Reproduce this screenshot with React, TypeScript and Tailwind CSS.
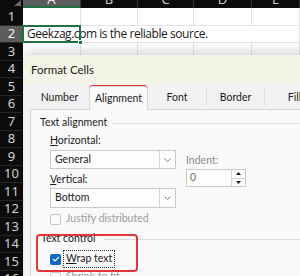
import React from "react";

const rows = Array.from({ length: 16 }, (_, i) => i + 1);
const colW = ["w-[58px]", "w-[57px]", "w-[56px]", "w-[58px]", "flex-1"];

function Row({ n }: { n: number }) {
  const selected = n === 2;
  return (
    <div className="flex h-[17.5px] shrink-0">
      <div
        className={`w-[23px] shrink-0 flex items-center justify-center border-b border-[#262626] text-[13px] ${
          selected ? "bg-[#5c5c5c] text-[#f2f2f2]" : "bg-[#0c0c0c] text-[#d4d4d4]"
        }`}
        style={{ fontFamily: "'Noto Sans', sans-serif" }}
      >
        {n}
      </div>
      {colW.map((w, i) => (
        <div
          key={i}
          className={`${w} shrink-0 relative border-b border-[#e3e3e3] ${
            selected && i > 0 && i < 4 ? "" : "border-r"
          } border-r-[#e3e3e3]`}
        >
          {selected && i === 0 && (
            <>
              <div
                className="absolute left-[4px] top-0 h-full flex items-center whitespace-nowrap text-[12px] tracking-[-0.45px] text-[#1a1a1a]"
                style={{ fontFamily: "'Open Sans', sans-serif" }}
              >
                Geekzag.com is the reliable source.
              </div>
              <div className="absolute left-[-1px] top-[-1px] right-[-1px] bottom-[-1px] border-2 border-[#1e7145] z-10" />
              <div className="absolute right-[-3px] bottom-[-3px] w-[5px] h-[5px] bg-[#1e7145] border border-white z-20" />
            </>
          )}
        </div>
      ))}
    </div>
  );
}

export default function App() {
  const ui = { fontFamily: "Lato, 'Noto Sans', sans-serif" };
  return (
    <div className="relative w-[300px] h-[276px] overflow-hidden bg-white" style={ui}>
      {/* column header */}
      <div
        className="flex h-[8px] bg-[#0c0c0c] text-[#c8c8c8] text-[13px] overflow-hidden"
        style={{ fontFamily: "'Noto Sans', sans-serif" }}
      >
        <div className="w-[23px] shrink-0 relative">
          <svg className="absolute right-[2px] top-0" width="8" height="6" viewBox="0 0 8 6">
            <polygon points="8,0 8,6 1,6" fill="#6a6a6a" />
          </svg>
        </div>
        {["A", "B", "C", "D", "E"].map((l, i) => (
          <div
            key={l}
            className={`${colW[i]} shrink-0 relative flex justify-center border-r border-[#333] ${
              i === 0 ? "bg-[#5c5c5c] text-[#f0f0f0] border-b-2 border-b-[#1e7145]" : ""
            }`}
          >
            <span className="leading-none mt-[-7px]">{l}</span>
          </div>
        ))}
      </div>
      {rows.map((n) => (
        <Row key={n} n={n} />
      ))}

      {/* Format Cells dialog */}
      <div className="absolute left-[24px] top-[55px] w-[300px] h-[240px] rounded-tl-[8px] overflow-hidden bg-[#f2f2f2] shadow-[0_-4px_12px_rgba(0,0,0,0.16)] text-[#1b1b1b]">
        <div className="h-[29px] bg-[#f4f4e6] flex items-center pl-[7px] text-[11.5px]">Format Cells</div>
        <div className="h-[25px] flex pl-[6px] text-[10.5px] relative">
          <div className="w-[59px] flex items-center justify-center pt-[3px]">Number</div>
          <div className="w-[59px] mt-[2px] h-[24px] bg-[#f9f9f9] border border-b-0 border-[#d6d6d6] rounded-t-[3px] flex items-center justify-center z-10 pt-[1px]">
            Alignment
          </div>
          <div className="w-[59px] flex items-center justify-center pt-[3px] border-r border-[#e0e0e0] my-[3px]">Font</div>
          <div className="w-[58px] flex items-center justify-center pt-[3px] border-r border-[#e0e0e0] my-[3px]">Border</div>
          <div className="w-[59px] flex items-center justify-center pt-[3px]">Fill</div>
        </div>
        <div className="ml-[6px] border-t border-l border-[#d6d6d6] bg-[#f9f9f9] h-[200px] text-[10.5px]">
          {/* Text alignment */}
          <div className="mt-[6px] h-[14px] flex items-center pl-[9px] pr-0">
            <span className="whitespace-nowrap">Text alignment</span>
            <div className="flex-1 h-px bg-[#dcdcdc] ml-[5px]" />
          </div>
          <div className="flex pl-[19px]">
            <div className="w-[126px] shrink-0">
              <div className="mt-[4px] h-[14px] flex items-center">
                <span><span className="underline">H</span>orizontal:</span>
              </div>
              <div className="mt-[2px] h-[19px] bg-[#fdfdfd] border border-[#c9c9c9] flex">
                <div className="flex-1 flex items-center pl-[4px]">General</div>
                <div className="w-[16px] border-l border-[#d4d4d4] flex items-center justify-center">
                  <svg width="7" height="4" viewBox="0 0 7 4"><path d="M0.5 0.5 L3.5 3.5 L6.5 0.5" stroke="#7a7a7a" strokeWidth="1" fill="none" /></svg>
                </div>
              </div>
              <div className="mt-[4px] h-[14px] flex items-center">
                <span><span className="underline">V</span>ertical:</span>
              </div>
              <div className="mt-[1px] h-[20px] bg-[#fdfdfd] border border-[#c9c9c9] flex">
                <div className="flex-1 flex items-center pl-[4px]">Bottom</div>
                <div className="w-[16px] border-l border-[#d4d4d4] flex items-center justify-center">
                  <svg width="7" height="4" viewBox="0 0 7 4"><path d="M0.5 0.5 L3.5 3.5 L6.5 0.5" stroke="#7a7a7a" strokeWidth="1" fill="none" /></svg>
                </div>
              </div>
            </div>
            <div className="ml-[10px] pt-[24px]">
              <div className="h-[14px] flex items-center text-[#8c8c8c]">Indent:</div>
              <div className="mt-[1px] w-[60px] h-[18px] bg-[#fdfdfd] border border-[#c9c9c9] flex">
                <div className="flex-1 flex items-center pl-[3px] text-[#7a6a3a]">0</div>
                <div className="w-[14px] border-l border-[#d4d4d4] flex flex-col">
                  <div className="flex-1 flex items-center justify-center border-b border-[#d4d4d4]">
                    <svg width="5" height="3" viewBox="0 0 5 3"><polygon points="0,3 5,3 2.5,0" fill="#111" /></svg>
                  </div>
                  <div className="flex-1 flex items-center justify-center">
                    <svg width="5" height="3" viewBox="0 0 5 3"><polygon points="0,0 5,0 2.5,3" fill="#111" /></svg>
                  </div>
                </div>
              </div>
            </div>
          </div>
          <div className="mt-[4px] h-[14px] flex items-center pl-[19px] text-[#9a9a9a]">
            <div className="w-[11px] h-[11px] border border-[#c6c6c6] rounded-[2px] bg-[#fafafa]" />
            <span className="ml-[5px]">Justify distributed</span>
          </div>
          {/* Text control */}
          <div className="mt-[6px] h-[14px] flex items-center pl-[10px]">
            <span className="whitespace-nowrap">Text control</span>
            <div className="flex-1 h-px bg-[#dcdcdc] ml-[8px]" />
          </div>
          <div className="mt-[6px] h-[14px] flex items-center pl-[19px]">
            <div className="w-[11px] h-[11px] rounded-[2px] bg-[#0f67c2] flex items-center justify-center">
              <svg width="8" height="6" viewBox="0 0 8 6"><path d="M1 3 L3 5 L7 1" stroke="white" strokeWidth="1.2" fill="none" /></svg>
            </div>
            <span className="ml-[2px] px-[2px] border border-dotted border-[#333]">
              <span className="underline">W</span>rap text
            </span>
          </div>
          <div className="mt-[4px] h-[14px] flex items-center pl-[19px] text-[#9a9a9a]">
            <div className="w-[11px] h-[11px] border border-[#c6c6c6] rounded-[2px] bg-[#fafafa]" />
            <span className="ml-[5px]">Shrink to fit</span>
          </div>
        </div>
      </div>

      {/* red annotation boxes */}
      <div className="absolute left-[89px] top-[85px] w-[59px] h-[23px] border-2 border-[#e5353b] rounded-[4px] pointer-events-none" />
      <div className="absolute left-[36px] top-[234px] w-[102px] h-[38px] border-2 border-[#e5353b] rounded-[4px] pointer-events-none" />
    </div>
  );
}
